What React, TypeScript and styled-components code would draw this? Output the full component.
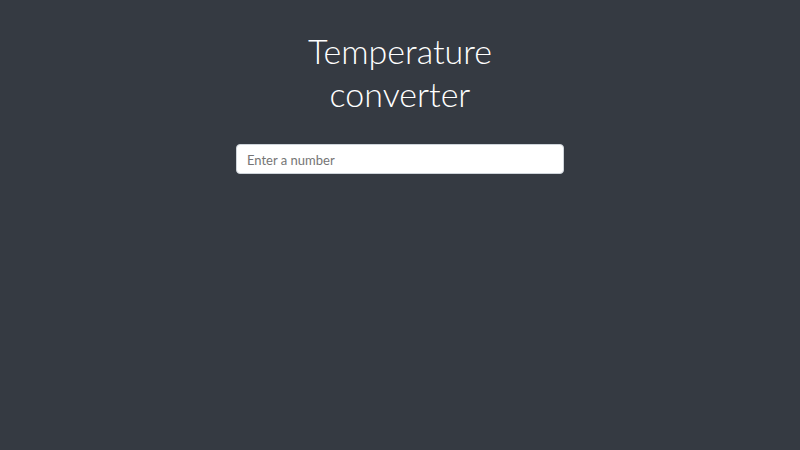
import styled, { createGlobalStyle } from "styled-components";

const GlobalStyle = createGlobalStyle`
  html, body {
    margin: 0;
    padding: 0;
    background-color: #353a42;
    font-family: Lato, "Open Sans", sans-serif;
  }
`;

const Page = styled.div`
  width: 100vw;
  min-height: 100vh;
  background-color: #353a42;
  display: flex;
  flex-direction: column;
  align-items: center;
  padding-top: 29px;
  box-sizing: border-box;
`;

const Title = styled.h1`
  margin: 0;
  font-family: Lato, "Open Sans", sans-serif;
  font-weight: 300;
  font-size: 34px;
  line-height: 43px;
  color: #ffffff;
  text-align: center;
  width: 220px;
`;

const NumberInput = styled.input`
  margin-top: 29px;
  width: 328px;
  height: 30px;
  box-sizing: border-box;
  border: 1px solid #ced4da;
  border-radius: 4px;
  padding: 1px 10px 0;
  font-family: Lato, "Open Sans", sans-serif;
  font-size: 13px;
  color: #495057;
  background: #ffffff;
  outline: none;

  ::placeholder {
    color: #6c757d;
  }
`;

const App = () => {
  return (
    <Page>
      <GlobalStyle />
      <Title>Temperature converter</Title>
      <NumberInput type="text" placeholder="Enter a number" />
    </Page>
  );
};

export default App;
